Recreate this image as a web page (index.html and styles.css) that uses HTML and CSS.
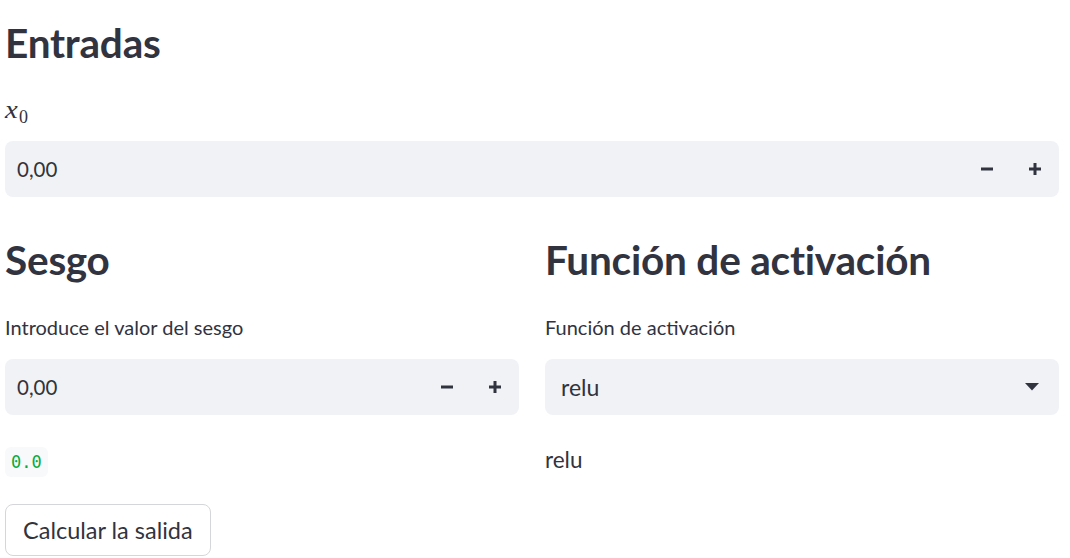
FILE: index.html
```html
<!DOCTYPE html>
<html lang="es">
<head>
<meta charset="utf-8">
<link rel="stylesheet" href="styles.css">
</head>
<body>
<main class="page">
  <h2 class="heading first">Entradas</h2>
  <div class="math-label"><span class="mi">x</span><span class="sub">0</span></div>
  <div class="num-input">
    <span class="value">0,00</span>
    <div class="steps">
      <button class="step" aria-label="minus"><svg width="12" height="12" viewBox="0 0 12 12"><rect x="0" y="4.5" width="12" height="3" fill="#31333f"/></svg></button>
      <button class="step" aria-label="plus"><svg width="12" height="12" viewBox="0 0 12 12"><rect x="0" y="4.5" width="12" height="3" fill="#31333f"/><rect x="4.5" y="0" width="3" height="12" fill="#31333f"/></svg></button>
    </div>
  </div>

  <div class="cols">
    <section class="col">
      <h2 class="heading">Sesgo</h2>
      <div class="label">Introduce el valor del sesgo</div>
      <div class="num-input">
        <span class="value">0,00</span>
        <div class="steps">
          <button class="step" aria-label="minus"><svg width="12" height="12" viewBox="0 0 12 12"><rect x="0" y="4.5" width="12" height="3" fill="#31333f"/></svg></button>
          <button class="step" aria-label="plus"><svg width="12" height="12" viewBox="0 0 12 12"><rect x="0" y="4.5" width="12" height="3" fill="#31333f"/><rect x="4.5" y="0" width="3" height="12" fill="#31333f"/></svg></button>
        </div>
      </div>
      <div class="output"><code class="code">0.0</code></div>
      <button class="btn">Calcular la salida</button>
    </section>
    <section class="col">
      <h2 class="heading">Función de activación</h2>
      <div class="label">Función de activación</div>
      <div class="select">
        <span class="value">relu</span>
        <svg class="caret" width="14" height="8" viewBox="0 0 14 8"><path d="M0 0 L14 0 L7 7.5 Z" fill="#31333f"/></svg>
      </div>
      <div class="output"><span class="plain">relu</span></div>
    </section>
  </div>
</main>
</body>
</html>
```

FILE: styles.css
```css
html, body {
  margin: 0;
  padding: 0;
  background: #ffffff;
}

body {
  font-family: "Lato", "Source Sans Pro", "Noto Sans", sans-serif;
  color: #31333f;
}

.page {
  padding: 0 11px 0 5px;
}

.heading {
  margin: 0;
  font-size: 40.5px;
  font-weight: 700;
  line-height: 50px;
  letter-spacing: -0.2px;
  color: #31333f;
}

.heading.first {
  padding-top: 18px;
}

.math-label {
  margin-top: 30px;
  height: 24px;
  font-family: "Liberation Serif", "DejaVu Serif", serif;
  font-size: 25px;
  line-height: 24px;
  color: #31333f;
}

.math-label .mi {
  font-style: italic;
  display: inline-block;
  transform: scaleX(1.15);
  transform-origin: left center;
}

.math-label .sub {
  font-size: 18px;
  position: relative;
  top: 5px;
  margin-left: 3px;
}

.num-input,
.select {
  display: flex;
  align-items: center;
  height: 56px;
  border-radius: 8px;
  background: #f0f2f6;
  margin-top: 19px;
}

.num-input .value,
.select .value {
  flex: 1;
  padding-left: 12px;
  font-size: 20.5px;
  color: #31333f;
}

.select .value {
  padding-left: 16px;
  font-size: 23px;
}

.steps {
  display: flex;
  height: 100%;
}

.step {
  width: 48px;
  height: 100%;
  border: 0;
  background: transparent;
  display: flex;
  align-items: center;
  justify-content: center;
  padding: 0;
}

.caret {
  margin-right: 20px;
}

.cols {
  display: grid;
  grid-template-columns: 1fr 1fr;
  column-gap: 26px;
  margin-top: 38px;
}

.col {
  display: flex;
  flex-direction: column;
  align-items: stretch;
}

.label {
  margin-top: 30px;
  font-size: 20px;
  line-height: 24px;
  color: #31333f;
}

.col .num-input,
.col .select {
  margin-top: 20px;
}

.output {
  margin-top: 32px;
  height: 30px;
  display: flex;
  align-items: center;
}

.code {
  font-family: "DejaVu Sans Mono", "Liberation Mono", monospace;
  font-size: 17px;
  line-height: 20px;
  color: #09ab3b;
  background: #f8f9fb;
  border-radius: 6px;
  padding: 5px 6px;
}

.plain {
  font-size: 22.5px;
  line-height: 26px;
  position: relative;
  top: -2px;
  color: #31333f;
}

.btn {
  align-self: flex-start;
  margin-top: 27px;
  height: 52px;
  padding: 0 17px;
  font-family: inherit;
  font-size: 23.5px;
  color: #31333f;
  background: #ffffff;
  border: 1px solid #d5d6d9;
  border-radius: 8px;
}
```
